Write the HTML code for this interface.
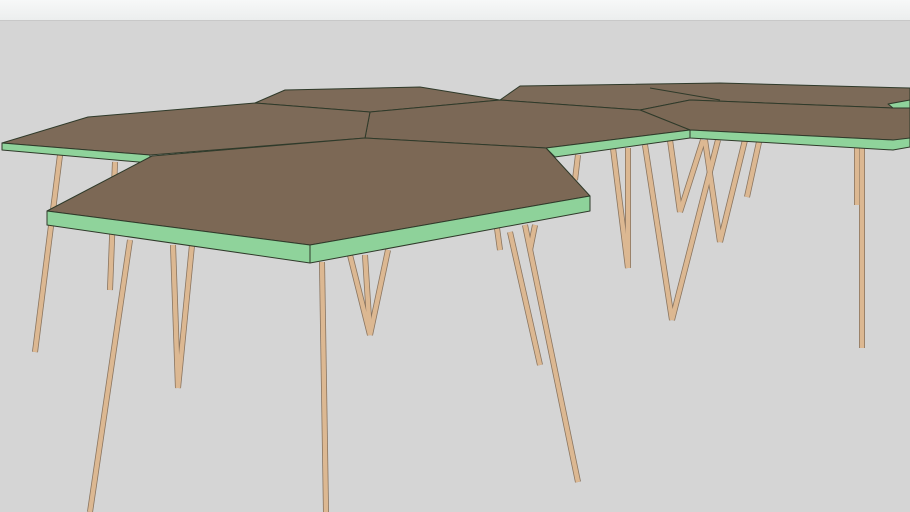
<!DOCTYPE html>
<html><head><style>
html,body{margin:0;padding:0;width:910px;height:512px;overflow:hidden;background:#d5d5d5;}
</style></head><body>
<svg width="910" height="512" viewBox="0 0 910 512" xmlns="http://www.w3.org/2000/svg">
<defs><linearGradient id="top" x1="0" y1="0" x2="0" y2="1"><stop offset="0" stop-color="#f7f8f8"/><stop offset="1" stop-color="#eceeee"/></linearGradient></defs>
<rect x="0" y="0" width="910" height="20" fill="url(#top)"/>
<rect x="0" y="20" width="910" height="1" fill="#c8c8c8"/>
<g stroke-linecap="butt">
<g stroke-width="6" stroke="#8a7560">
<line x1="60" y1="155" x2="35" y2="352"/><line x1="115" y1="162" x2="110" y2="290"/>
<line x1="497" y1="228" x2="500" y2="250"/><line x1="535" y1="225" x2="530" y2="250"/>
<line x1="578" y1="155" x2="575" y2="180"/>
<line x1="613" y1="148" x2="628" y2="268"/><line x1="628" y1="148" x2="628" y2="268"/>
<line x1="645" y1="145" x2="672" y2="320"/><line x1="718" y1="140" x2="672" y2="320"/>
<line x1="670" y1="140" x2="680" y2="212"/><line x1="703" y1="140" x2="680" y2="212"/>
<line x1="705" y1="140" x2="720" y2="242"/><line x1="745" y1="140" x2="720" y2="242"/>
<line x1="759" y1="142" x2="747" y2="197"/>
<line x1="862" y1="148" x2="862" y2="348"/><line x1="857" y1="148" x2="857" y2="205"/>
<line x1="173" y1="245" x2="178" y2="388"/><line x1="192" y1="245" x2="178" y2="388"/>
<line x1="350" y1="255" x2="370" y2="335"/><line x1="388" y1="250" x2="370" y2="335"/><line x1="365" y1="255" x2="370" y2="335"/>
<line x1="130" y1="240" x2="90" y2="512"/><line x1="322" y1="262" x2="326" y2="512"/>
<line x1="510" y1="232" x2="540" y2="365"/><line x1="525" y1="225" x2="578" y2="482"/>
</g>
<g stroke-width="4.4" stroke="#dcb892">
<line x1="60" y1="155" x2="35" y2="352"/><line x1="115" y1="162" x2="110" y2="290"/>
<line x1="497" y1="228" x2="500" y2="250"/><line x1="535" y1="225" x2="530" y2="250"/>
<line x1="578" y1="155" x2="575" y2="180"/>
<line x1="613" y1="148" x2="628" y2="268"/><line x1="628" y1="148" x2="628" y2="268"/>
<line x1="645" y1="145" x2="672" y2="320"/><line x1="718" y1="140" x2="672" y2="320"/>
<line x1="670" y1="140" x2="680" y2="212"/><line x1="703" y1="140" x2="680" y2="212"/>
<line x1="705" y1="140" x2="720" y2="242"/><line x1="745" y1="140" x2="720" y2="242"/>
<line x1="759" y1="142" x2="747" y2="197"/>
<line x1="862" y1="148" x2="862" y2="348"/><line x1="857" y1="148" x2="857" y2="205"/>
<line x1="173" y1="245" x2="178" y2="388"/><line x1="192" y1="245" x2="178" y2="388"/>
<line x1="350" y1="255" x2="370" y2="335"/><line x1="388" y1="250" x2="370" y2="335"/><line x1="365" y1="255" x2="370" y2="335"/>
<line x1="130" y1="240" x2="90" y2="512"/><line x1="322" y1="262" x2="326" y2="512"/>
<line x1="510" y1="232" x2="540" y2="365"/><line x1="525" y1="225" x2="578" y2="482"/>
</g>
</g>
<g stroke="#2f3a2a" stroke-width="1" stroke-linejoin="round">
<polygon points="500,100 520,86 720,83 910,88 910,112 893,108 690,100 640,110" fill="#7c6a58"/>
<line x1="650" y1="88" x2="720" y2="100" stroke="#2f3a2a"/>
<polygon points="640,110 690,100 893,108 910,106 910,140 893,140 690,130" fill="#7b6855"/>
<polygon points="690,130 893,140 910,138 910,147 893,150 690,138" fill="#8fd39b"/>
<polygon points="888,104 910,100 910,108 893,108" fill="#8fd39b"/>
<polygon points="255,103 285,90 420,87 500,100 370,112" fill="#7d6a58"/>
<polygon points="370,112 500,100 640,110 690,130 546,148 365,138" fill="#7b6856"/>
<polygon points="546,148 690,130 690,138 555,157" fill="#8fd39b"/>
<polygon points="2,143 88,117 255,103 370,112 365,138 150,155" fill="#7d6a58"/>
<polygon points="2,143 150,155 150,163 2,150" fill="#8fd39b"/>
<polygon points="47,211 152,156 365,138 546,148 590,196 310,245" fill="#7c6855"/>
<polygon points="47,211 310,245 310,263 47,225" fill="#8fd39b"/>
<polygon points="310,245 590,196 590,211 310,263" fill="#8ed29a"/>
</g>
</svg>
</body></html>
